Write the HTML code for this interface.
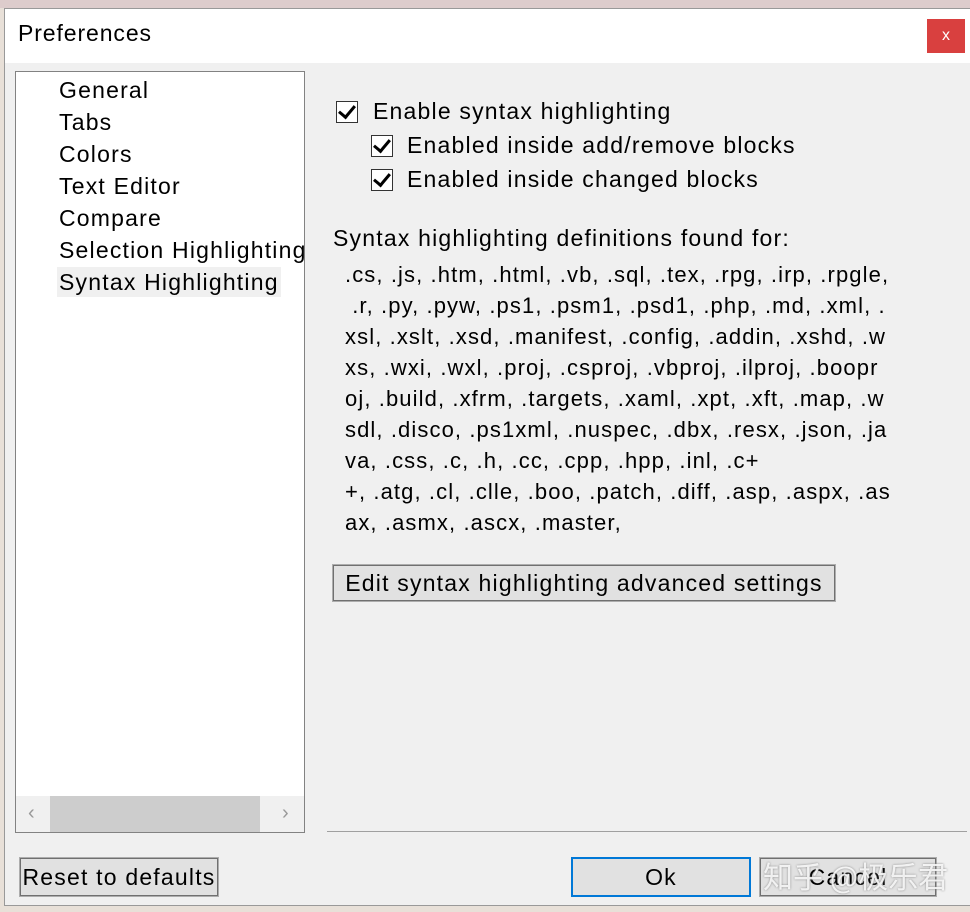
<!DOCTYPE html>
<html><head><style>
body{margin:0;width:970px;height:912px;background:#e8e0d8;position:relative;overflow:hidden;font-family:"Segoe UI","Liberation Sans",sans-serif;color:#000}
.a{position:absolute}
#dlg{left:4px;top:8px;width:965px;height:896px;background:#f0f0f0;border:1px solid #999}
#title{left:0;top:0;width:965px;height:54px;background:#fff}
.t{font-size:23px;white-space:nowrap;line-height:30px;letter-spacing:1.2px}
.cb{width:20px;height:20px;border:1px solid #333;background:#fff}
.cb:after{content:"";position:absolute;left:5px;top:0px;width:7px;height:13px;border:solid #000;border-width:0 3px 3px 0;transform:rotate(40deg)}
.btn{background:#e1e1e1;border:1px solid #adadad;box-shadow:inset 0 0 0 1px #707070}
</style></head><body>
<div class="a" style="left:0;top:0;width:970px;height:8px;background:#dcc"></div>
<div class="a" id="dlg">
 <div class="a" id="title"><div class="a t" style="left:13px;top:9px;font-size:23px;letter-spacing:0.9px">Preferences</div>
 <div class="a" style="left:922px;top:10px;width:38px;height:34px;background:#d9403f;color:#fff;font-size:16px;text-align:center;line-height:34px">x</div></div>
 <div class="a" style="left:10px;top:62px;width:288px;height:760px;background:#fff;border:1px solid #828282;overflow:hidden">
  <div class="a t" style="left:43px;top:3px">General</div>
  <div class="a t" style="left:43px;top:35px">Tabs</div>
  <div class="a t" style="left:43px;top:67px">Colors</div>
  <div class="a t" style="left:43px;top:99px">Text Editor</div>
  <div class="a t" style="left:43px;top:131px">Compare</div>
  <div class="a t" style="left:43px;top:163px">Selection Highlighting</div>
  <div class="a t" style="left:41px;top:195px;background:#f0f0f0;padding:0 2px">Syntax Highlighting</div>
  <div class="a" style="left:0;top:724px;width:288px;height:36px;background:#f0f0f0"></div>
  <div class="a" style="left:34px;top:724px;width:210px;height:36px;background:#cdcdcd"></div>
  <div class="a" style="left:12px;top:730px;color:#999;font-size:20px">‹</div>
  <div class="a" style="left:266px;top:730px;color:#999;font-size:20px">›</div>
 </div>
 <div class="a cb" style="left:331px;top:92px"></div>
 <div class="a t" style="left:368px;top:87px">Enable syntax highlighting</div>
 <div class="a cb" style="left:366px;top:126px"></div>
 <div class="a t" style="left:402px;top:121px">Enabled inside add/remove blocks</div>
 <div class="a cb" style="left:366px;top:160px"></div>
 <div class="a t" style="left:402px;top:155px">Enabled inside changed blocks</div>
 <div class="a t" style="left:328px;top:214px">Syntax highlighting definitions found for:</div>
 <div class="a" style="left:340px;top:250px;font-size:22px;line-height:31px;white-space:pre;letter-spacing:1.1px">.cs, .js, .htm, .html, .vb, .sql, .tex, .rpg, .irp, .rpgle,
 .r, .py, .pyw, .ps1, .psm1, .psd1, .php, .md, .xml, .
xsl, .xslt, .xsd, .manifest, .config, .addin, .xshd, .w
xs, .wxi, .wxl, .proj, .csproj, .vbproj, .ilproj, .boopr
oj, .build, .xfrm, .targets, .xaml, .xpt, .xft, .map, .w
sdl, .disco, .ps1xml, .nuspec, .dbx, .resx, .json, .ja
va, .css, .c, .h, .cc, .cpp, .hpp, .inl, .c+
+, .atg, .cl, .clle, .boo, .patch, .diff, .asp, .aspx, .as
ax, .asmx, .ascx, .master,</div>
 <div class="a btn t" style="left:327px;top:555px;width:502px;height:36px;line-height:36px;text-align:center">Edit syntax highlighting advanced settings</div>
 <div class="a" style="left:322px;top:822px;width:640px;height:1px;background:#a0a0a0"></div>
 <div class="a btn t" style="left:14px;top:848px;width:198px;height:38px;line-height:38px;text-align:center">Reset to defaults</div>
 <div class="a t" style="left:566px;top:848px;width:176px;height:36px;line-height:36px;text-align:center;background:#e1e1e1;border:2px solid #0078d7">Ok</div>
 <div class="a btn t" style="left:754px;top:848px;width:176px;height:38px;line-height:38px;text-align:center">Cancel</div>
 <div class="a" style="left:758px;top:844px;font-size:30px;color:rgba(255,255,255,.85);font-family:'Noto Sans CJK SC',sans-serif;text-shadow:0 0 2px #888">知乎 @极乐君</div>
</div>
</body></html>
